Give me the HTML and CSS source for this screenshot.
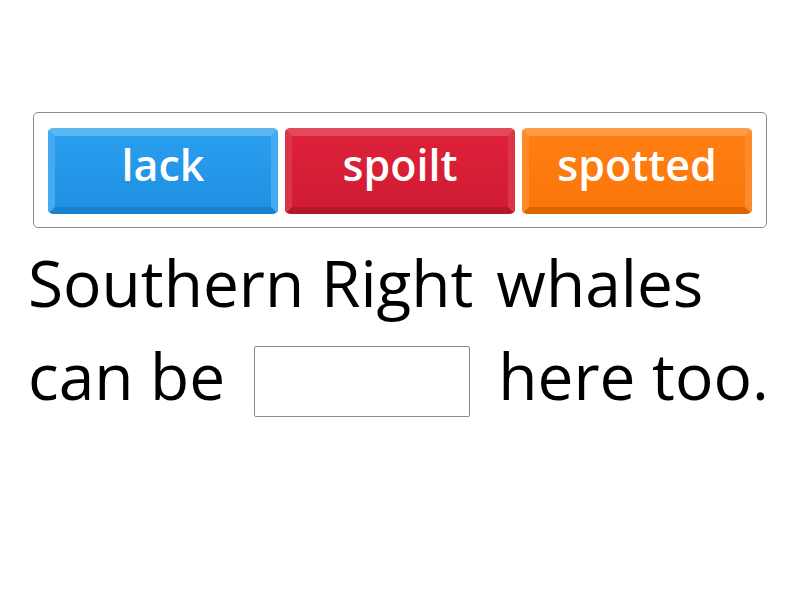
FILE: index.html
```html
<!DOCTYPE html>
<html>
<head>
<meta charset="utf-8">
<link rel="stylesheet" href="styles.css">
</head>
<body>
<div class="page">
  <div class="tray">
    <div class="tile tile-blue">lack</div>
    <div class="tile tile-red">spoilt</div>
    <div class="tile tile-orange">spotted</div>
  </div>
  <div class="sentence">
    <div class="line">
      <span class="word">Southern Right</span>
      <span class="word">whales</span>
    </div>
    <div class="line line-wide">
      <span class="word">can be</span>
      <span class="blank"></span>
      <span class="word">here too.</span>
    </div>
  </div>
</div>
</body>
</html>
```

FILE: styles.css
```css
html, body {
  margin: 0;
  padding: 0;
  background: #ffffff;
}
body {
  font-family: "Open Sans", "Noto Sans", sans-serif;
  color: #000;
}
.page {
  width: 800px;
  height: 600px;
  padding-top: 112px;
  box-sizing: border-box;
}
.tray {
  margin: 0 33px;
  height: 116px;
  box-sizing: border-box;
  border: 1px solid #8a8a8a;
  border-radius: 5px;
  display: flex;
  gap: 7px;
  padding: 15px 14px 0 14px;
}
.tile {
  flex: 0 0 230px;
  height: 86px;
  box-sizing: border-box;
  border-radius: 5px;
  border-style: solid;
  border-width: 8px 7px 7px 7px;
  display: flex;
  align-items: center;
  justify-content: center;
  color: #fff;
  font-weight: 600;
  font-size: 43px;
  line-height: 1;
  padding-bottom: 14px;
}
.tile-blue {
  background: linear-gradient(#2a9eee, #1f90e2);
  border-color: #5cb6f2 #46aaf0 #1a80cb #46aaf0;
}
.tile-red {
  background: linear-gradient(#dc2139, #d11c33);
  border-color: #e24a5c #dc3449 #b3172a #dc3449;
}
.tile-orange {
  background: linear-gradient(#ff7e12, #fb770a);
  border-color: #ff9b46 #ff8a2a #dc6500 #ff8a2a;
}
.sentence {
  margin: 8px 28px 0 28px;
  font-size: 64px;
}
.line {
  display: flex;
  align-items: center;
  height: 93px;
}
.line .word {
  white-space: pre;
  flex: 0 0 auto;
}
.line > * + * {
  margin-left: 23px;
}
.line-wide > .blank {
  margin-left: 29px;
}
.line-wide > .blank + .word {
  margin-left: 28px;
}
.blank {
  flex: 0 0 216px;
  height: 71px;
  box-sizing: border-box;
  border: 1px solid #8a8a8a;
  border-radius: 2px;
  background: #fff;
  margin-top: 12px;
}
```
